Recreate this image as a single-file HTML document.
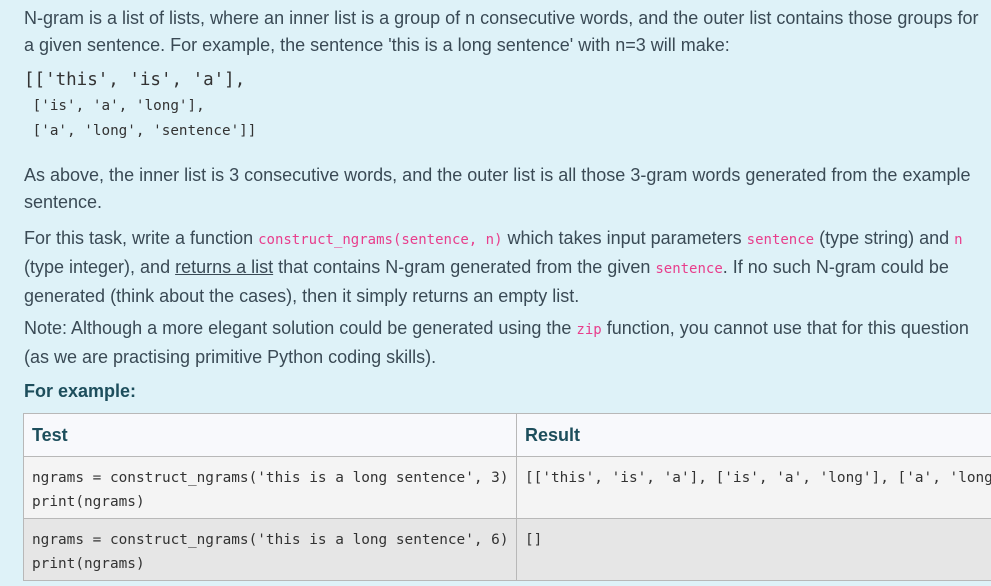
<!DOCTYPE html>
<html><head><meta charset="utf-8"><style>
html,body{margin:0;padding:0;width:991px;height:586px;overflow:hidden;background:#def2f8;}
body{font-family:"Liberation Sans",Arial,sans-serif;color:#3a4a55;font-size:18px;}
.p{position:absolute;left:24px;white-space:nowrap;line-height:27px;}
code,.m{font-family:"DejaVu Sans Mono","Liberation Mono",monospace;}
code{color:#e83e8c;font-size:14px;}
.pre{position:absolute;left:24px;white-space:pre;color:#333;line-height:24.5px;font-size:14.3px;}
a{color:#3a4a55;text-decoration:underline;}
b.h{position:absolute;left:24px;top:381px;color:#1d4e5c;font-size:18px;}
.wrap{position:absolute;left:23px;top:413px;width:968px;overflow:hidden;}
table{border-collapse:collapse;width:1000px;table-layout:fixed;}
td,th{border:1px solid #b8b8b8;text-align:left;vertical-align:top;overflow:hidden;}
th{height:42px;color:#1d4e5c;font-size:18px;padding:0 8px;background:#f8f9fc;vertical-align:middle;}
td{font-family:"DejaVu Sans Mono","Liberation Mono",monospace;font-size:14.4px;color:#333;padding:9px 8px 0;line-height:24px;height:52px;white-space:pre;}
tr.r1 td{background:#f4f4f4;}
tr.r2 td{background:#e6e6e6;}
</style></head><body>
<div class="p" style="top:5px">N-gram is a list of lists, where an inner list is a group of n consecutive words, and the outer list contains those groups for<br>a given sentence. For example, the sentence 'this is a long sentence' with n=3 will make:</div>
<div class="pre m" style="top:68px;font-size:17.5px">[['this', 'is', 'a'],</div>
<div class="pre m" style="top:94px"> ['is', 'a', 'long'],<br> ['a', 'long', 'sentence']]</div>
<div class="p" style="top:162px">As above, the inner list is 3 consecutive words, and the outer list is all those 3-gram words generated from the example<br>sentence.</div>
<div class="p" style="top:225px">For this task, write a function <code>construct_ngrams(sentence, n)</code> which takes input parameters <code>sentence</code> (type string) and <code>n</code><br>(type integer), and <a>returns a list</a> that contains N-gram generated from the given <code>sentence</code>. If no such N-gram could be<br>generated (think about the cases), then it simply returns an empty list.</div>
<div class="p" style="top:315px">Note: Although a more elegant solution could be generated using the <code>zip</code> function, you cannot use that for this question<br>(as we are practising primitive Python coding skills).</div>
<b class="h">For example:</b>
<div class="wrap"><table>
<colgroup><col style="width:493px"><col></colgroup>
<tr><th>Test</th><th>Result</th></tr>
<tr class="r1"><td>ngrams = construct_ngrams('this is a long sentence', 3)
print(ngrams)</td><td>[['this', 'is', 'a'], ['is', 'a', 'long'], ['a', 'long', 'sentence']]</td></tr>
<tr class="r2"><td>ngrams = construct_ngrams('this is a long sentence', 6)
print(ngrams)</td><td>[]</td></tr>
</table></div>
</body></html>
